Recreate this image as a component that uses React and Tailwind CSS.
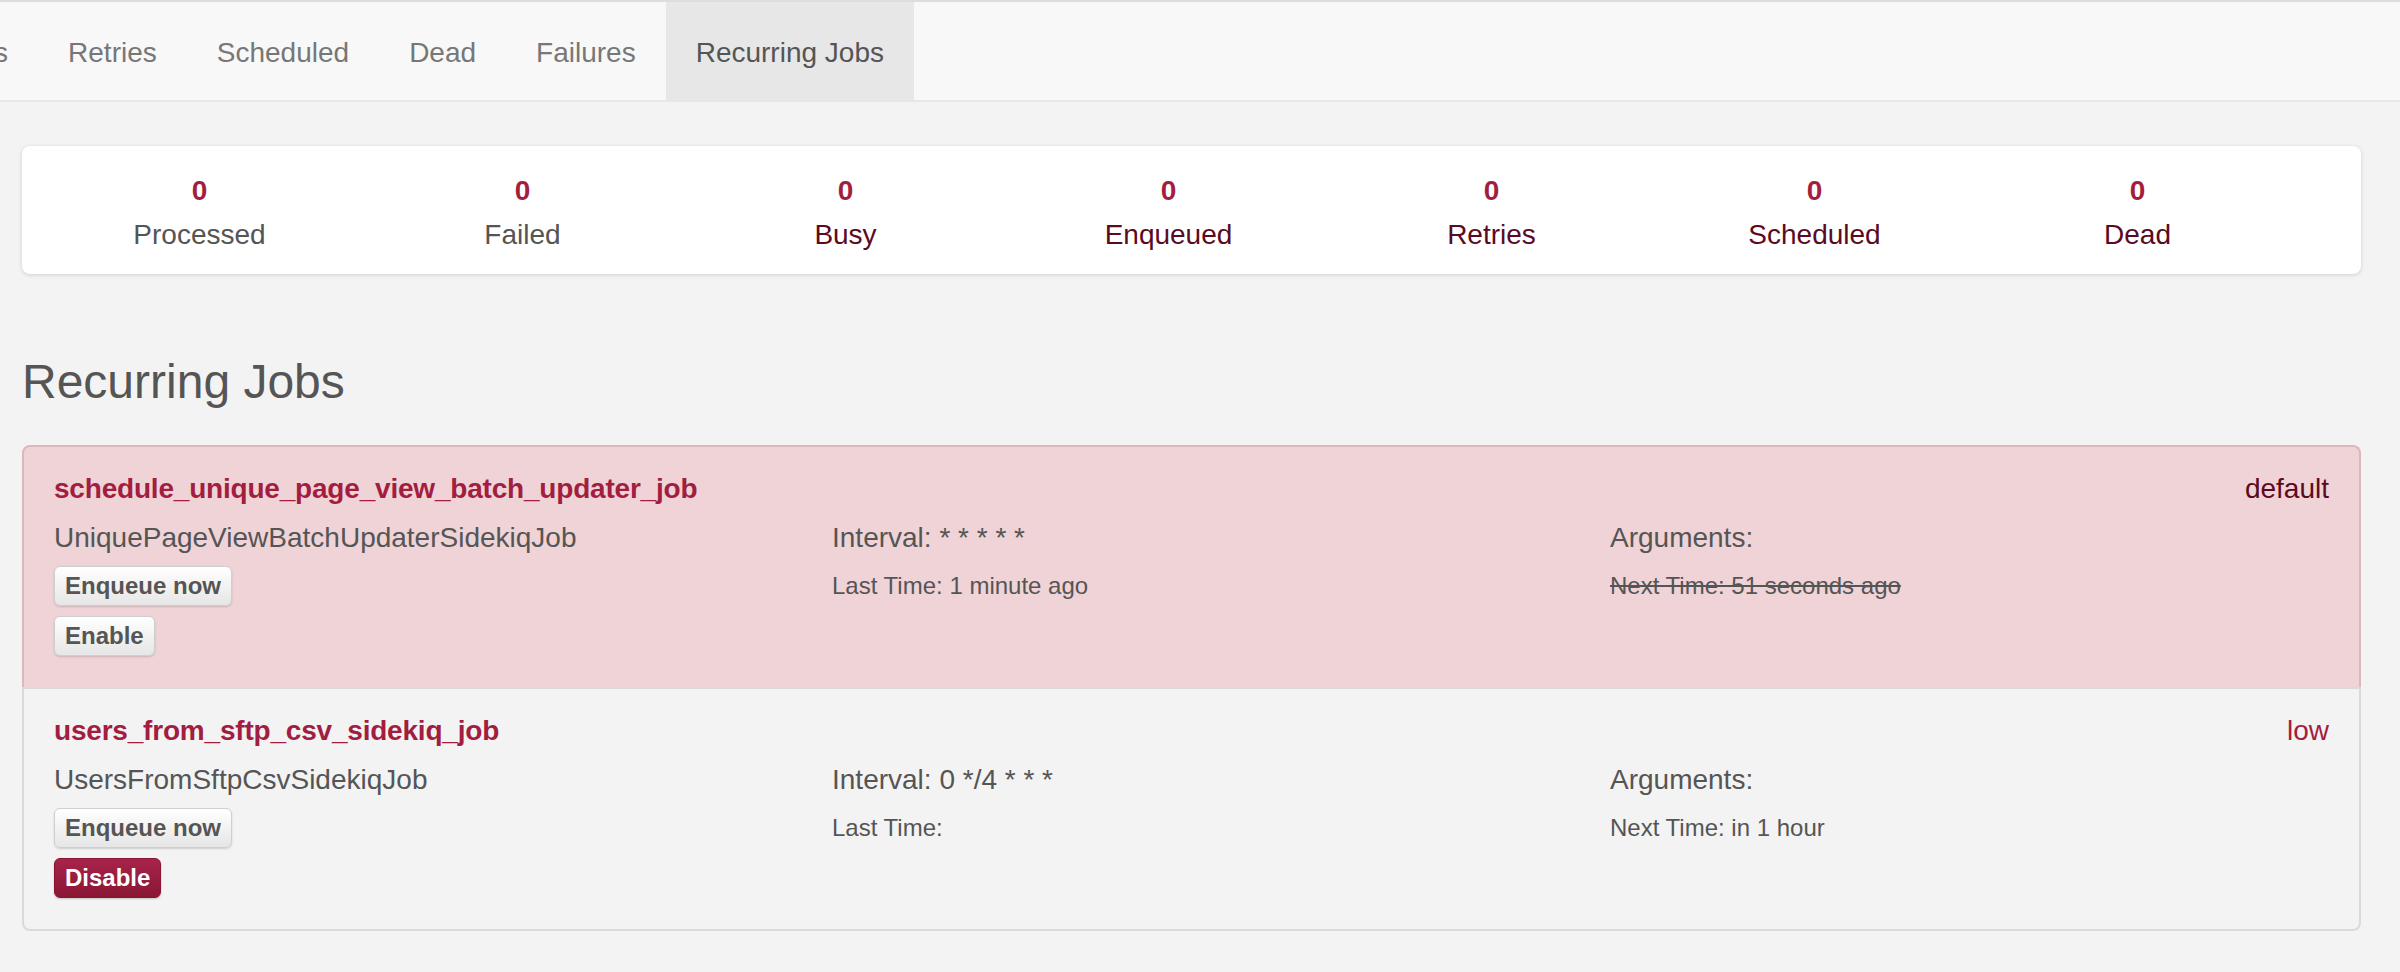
import React from 'react'

const tabs = ['Queues', 'Retries', 'Scheduled', 'Dead', 'Failures', 'Recurring Jobs']

const stats = [
  { label: 'Processed', muted: true },
  { label: 'Failed', muted: true },
  { label: 'Busy' },
  { label: 'Enqueued' },
  { label: 'Retries' },
  { label: 'Scheduled' },
  { label: 'Dead' },
]

const jobs = [
  {
    name: 'schedule_unique_page_view_batch_updater_job',
    klass: 'UniquePageViewBatchUpdaterSidekiqJob',
    queue: 'default',
    interval: '* * * * *',
    lastTime: 'Last Time: 1 minute ago',
    nextTime: 'Next Time: 51 seconds ago',
    enabled: false,
  },
  {
    name: 'users_from_sftp_csv_sidekiq_job',
    klass: 'UsersFromSftpCsvSidekiqJob',
    queue: 'low',
    interval: '0 */4 * * *',
    lastTime: 'Last Time:',
    nextTime: 'Next Time: in 1 hour',
    enabled: true,
  },
]

function Btn({ children, danger }) {
  return (
    <button
      className={
        danger
          ? 'h-[40px] px-[10px] text-[24px] font-bold leading-none text-white rounded-[6px] border border-[#8a1533] bg-linear-to-b from-[#a8234a] to-[#8a1634] shadow-[0_1px_2px_rgba(0,0,0,0.2)]'
          : 'h-[40px] px-[10px] text-[24px] font-bold leading-none text-[#555] rounded-[6px] border border-[#cfcfcf] bg-linear-to-b from-white to-[#e6e6e6] shadow-[0_1px_2px_rgba(0,0,0,0.15)]'
      }
    >
      {children}
    </button>
  )
}

function JobRow({ job, first }) {
  return (
    <div
      className={
        first
          ? 'bg-[#efd3d6] border-2 border-b-0 border-[#dbb8bc] rounded-t-[8px] px-[30px] pt-[22px] pb-[31px]'
          : 'bg-[#f3f3f3] border-2 border-[#dadada] rounded-b-[8px] px-[30px] pt-[22px] pb-[31px]'
      }
    >
      <div className="flex justify-between text-[28px] leading-[40px]">
        <span className="font-bold tracking-[-0.2px] text-[#a31d40]">{job.name}</span>
        <span className={first ? 'text-[#5a0b22]' : 'text-[#a31d40]'}>{job.queue}</span>
      </div>
      <div className="grid grid-cols-[778px_778px_1fr] mt-[9px]">
        <div className="flex flex-col items-start">
          <div className="text-[28px] leading-[40px]">{job.klass}</div>
          <div className="mt-[8px]"><Btn>Enqueue now</Btn></div>
          <div className="mt-[10px]">
            {job.enabled ? <Btn danger>Disable</Btn> : <Btn>Enable</Btn>}
          </div>
        </div>
        <div>
          <div className="text-[28px] leading-[40px]">Interval: {job.interval}</div>
          <div className="mt-[10px] text-[24px] leading-[36px]">{job.lastTime}</div>
        </div>
        <div>
          <div className="text-[28px] leading-[40px]">Arguments:</div>
          <div className={'mt-[10px] text-[24px] leading-[36px]' + (job.enabled ? '' : ' line-through')}>
            {job.nextTime}
          </div>
        </div>
      </div>
    </div>
  )
}

export default function App() {
  return (
    <div className="min-h-[972px] bg-[#f3f3f3] text-[#555] font-['Liberation_Sans',Arial,sans-serif]">
      {/* Nav */}
      <div className="h-[102px] bg-[#f8f8f8] border-t-2 border-t-[#dddddd] border-b-2 border-b-[#e7e7e7] overflow-hidden">
        <div className="flex h-full ml-[-120px]">
          {tabs.map(t => (
            <div
              key={t}
              className={
                'flex items-center px-[30px] pt-[3px] text-[28px] ' +
                (t === 'Recurring Jobs' ? 'bg-[#e7e7e7] text-[#555]' : 'text-[#777]')
              }
            >
              {t}
            </div>
          ))}
        </div>
      </div>

      <div className="pl-[22px] pr-[39px]">
        {/* Stats */}
        <div className="mt-[44px] bg-white rounded-[8px] shadow-[0_1px_4px_rgba(0,0,0,0.15)] pl-[16px] pt-[25px] pb-[19px]">
          <div className="grid grid-cols-[repeat(7,323px)]">
            {stats.map(s => (
              <div key={s.label} className="flex flex-col items-center">
                <div className="text-[28px] leading-[40px] font-bold text-[#a31d40]">0</div>
                <div className={'mt-[4px] text-[28px] leading-[40px] ' + (s.muted ? 'text-[#555]' : 'text-[#5a0b22]')}>
                  {s.label}
                </div>
              </div>
            ))}
          </div>
        </div>

        <h3 className="mt-[81px] text-[48px] leading-[53px] text-[#555]">Recurring Jobs</h3>

        {/* Jobs */}
        <div className="mt-[37px]">
          {jobs.map((job, i) => (
            <JobRow key={job.name} job={job} first={i === 0} />
          ))}
        </div>
      </div>
    </div>
  )
}
